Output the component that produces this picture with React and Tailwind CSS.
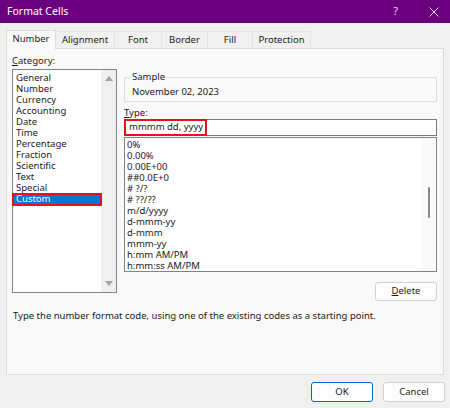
import React from "react";

const cats = ["General","Number","Currency","Accounting","Date","Time","Percentage","Fraction","Scientific","Text","Special","Custom"];
const fmts = ["0%","0.00%","0.00E+00","##0.0E+0","# ?/?","# ??/??","m/d/yyyy","d-mmm-yy","d-mmm","mmm-yy","h:mm AM/PM","h:mm:ss AM/PM"];
const tabs = ["Alignment","Font","Border","Fill","Protection"];
const tabW = { Alignment: 59, Font: 47, Border: 46, Fill: 45, Protection: 58 };

export default function App() {
  return (
    <div className="w-[450px] h-[408px] bg-[#f0f0f0] overflow-hidden text-[#1b1b1b] relative" style={{ fontFamily: '"Noto Sans", "Open Sans", sans-serif' }}>
      <div className="h-[23px] bg-[#6b007f] flex items-center pl-[7px] text-white text-[10.5px]">
        <span>Format Cells</span>
        <span className="ml-auto mr-[31px] text-[11px] text-[#e6d4ea]">?</span>
        <span className="mr-[11px] text-[#e6d4ea]">
          <svg width="10" height="10" viewBox="0 0 10 10"><path d="M0.5 0.5 L9.5 9.5 M9.5 0.5 L0.5 9.5" stroke="currentColor" strokeWidth="1" /></svg>
        </span>
      </div>
      <div className="pl-[6px] pt-[6px]">
        <div className="flex items-end h-[19px] text-[9.5px]">
          <div className="w-[50px] h-[19px] bg-[#f9f9f9] border border-b-0 border-[#dcdcdc] flex items-center justify-center relative z-10 -mb-px pb-px">Number</div>
          {tabs.map(t => (
            <div key={t} className="h-[17px] border border-b-0 border-l-0 border-[#e4e4e4] bg-[#f0f0f0] flex items-center justify-center" style={{ width: tabW[t] }}>{t}</div>
          ))}
        </div>
        <div className="w-[438px] h-[327px] border border-[#dcdcdc] bg-[#f9f9f9] pl-[5px] pt-[6px] text-[9.5px]">
          <div className="flex gap-[7px]">
            <div className="w-[105px] flex flex-col">
              <div className="h-[14px] leading-[12px]"><span className="underline">C</span>ategory:</div>
              <div className="h-[224px] border border-[#828282] bg-white flex">
                <div className="flex-1 pt-[2px] relative">
                  {cats.map(c => (
                    <div key={c} className={"h-[11px] leading-[11px] pl-[3px] " + (c === "Custom" ? "bg-[#0078d7] text-white" : "")}>{c}</div>
                  ))}
                  <div className="absolute left-[-1px] right-[-1px] top-[123px] h-[13px] border-2 border-[#e8101a]" />
                </div>
                <div className="w-[15px] bg-[#f0f0f0] flex flex-col items-center justify-between py-[6px]">
                  <svg width="8" height="5" viewBox="0 0 8 5"><path d="M0 5 L4 0 L8 5 Z" fill="#a3a3a3" /></svg>
                  <svg width="8" height="5" viewBox="0 0 8 5"><path d="M0 0 L4 5 L8 0 Z" fill="#a3a3a3" /></svg>
                </div>
              </div>
            </div>
            <div className="w-[313px] flex flex-col pt-[17px]">
              <fieldset className="h-[30px] border border-[#dcdcdc] px-[7px]">
                <legend className="px-0 text-[9.5px] leading-[10px]">Sample</legend>
                <div className="mt-[4px] leading-[12px]">November 02, 2023</div>
              </fieldset>
              <div className="mt-[5px] h-[12px] leading-[12px]"><span className="underline">T</span>ype:</div>
              <div className="h-[17px] border border-[#7a7a7a] bg-white relative flex items-center pl-[4px]">
                mmmm dd, yyyy
                <div className="absolute left-[-1px] top-[-1px] w-[83px] h-[17px] border-2 border-[#e8101a]" />
              </div>
              <div className="mt-[1px] h-[135px] border border-[#828282] bg-white flex">
                <div className="flex-1 pt-[1px]">
                  {fmts.map(f => (
                    <div key={f} className="h-[11px] leading-[11px] pl-[2px]">{f}</div>
                  ))}
                </div>
                <div className="w-[14px] bg-[#f9f9f9] flex justify-center pt-[49px]">
                  <div className="w-[2px] h-[31px] bg-[#8a8a8a] rounded-full" />
                </div>
              </div>
              <div className="flex justify-end mt-[10px]">
                <div className="w-[62px] h-[19px] border border-[#d0d0d0] rounded-[3px] bg-[#fdfdfd] flex items-center justify-center"><span className="underline">D</span>elete</div>
              </div>
            </div>
          </div>
          <div className="mt-[8px] pl-[1px]">Type the number format code, using one of the existing codes as a starting point.</div>
        </div>
        <div className="flex justify-end gap-[10px] mt-[7px] pr-[5px] text-[9.5px]">
          <div className="w-[62px] h-[20px] border border-[#0067c0] rounded-[3px] bg-[#fdfdfd] flex items-center justify-center">OK</div>
          <div className="w-[62px] h-[20px] border border-[#d0d0d0] rounded-[3px] bg-[#fdfdfd] flex items-center justify-center">Cancel</div>
        </div>
      </div>
    </div>
  );
}
